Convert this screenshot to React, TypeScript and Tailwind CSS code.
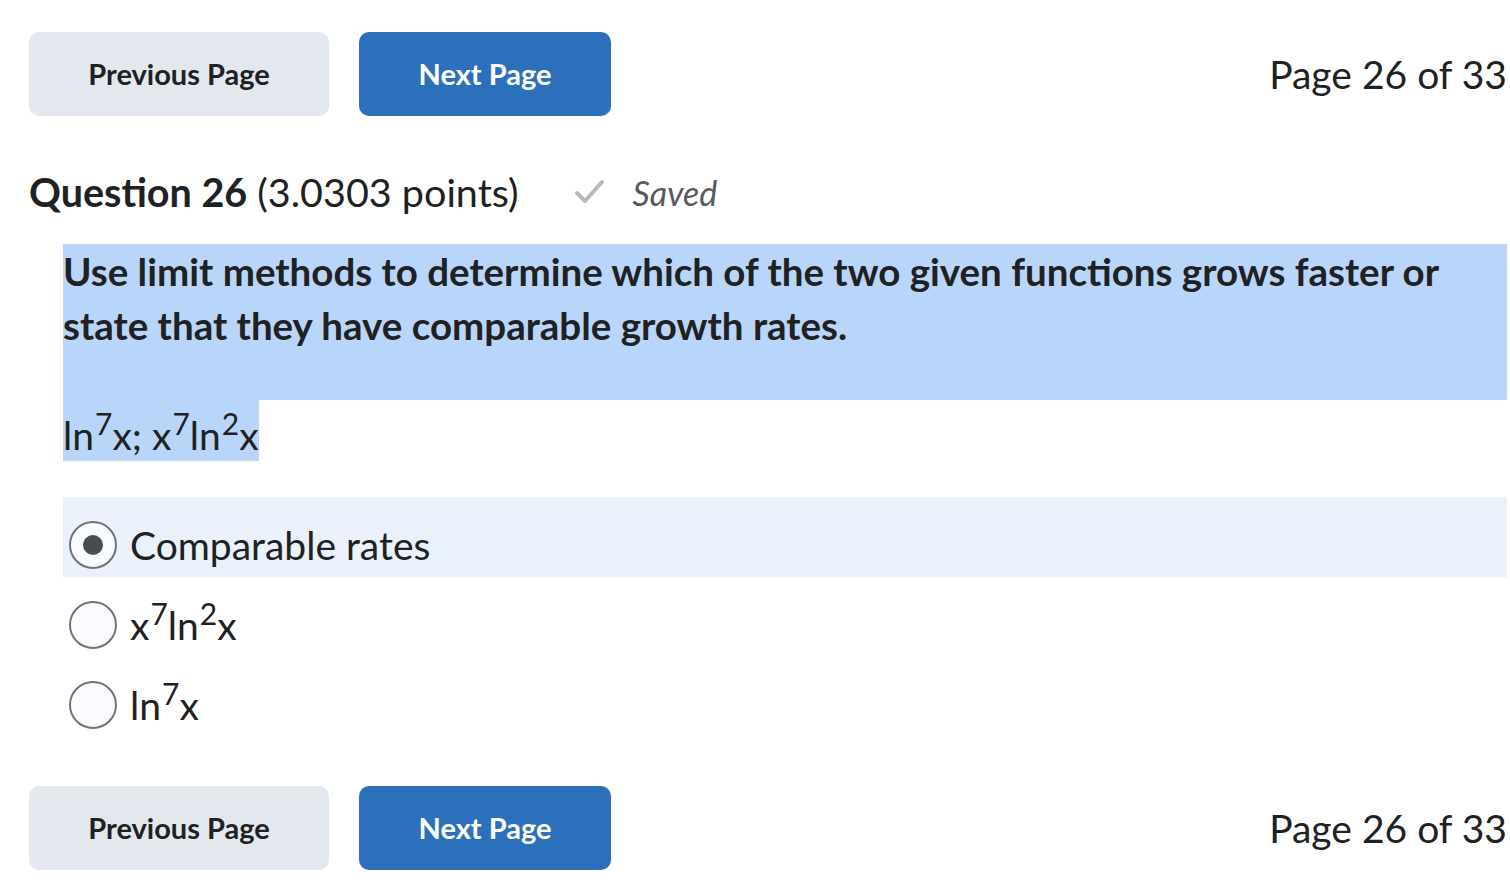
function Radio({ checked }: { checked?: boolean }) {
  return (
    <span className="flex h-[48px] w-[48px] shrink-0 items-center justify-center rounded-full border-2 border-[#6f7478] bg-[#f9fbff]">
      {checked && <span className="h-[20px] w-[20px] rounded-full bg-[#494c4e]" />}
    </span>
  );
}

function Pager() {
  return (
    <div className="flex items-center">
      <button className="h-[84px] w-[300px] rounded-[10px] bg-[#e3e8ee] text-[29px] font-bold text-[#202122]">
        Previous Page
      </button>
      <button className="ml-[30px] h-[84px] w-[252px] rounded-[10px] bg-[#2c6fba] text-[29px] font-bold text-white">
        Next Page
      </button>
      <div className="ml-auto text-[39px] text-[#202122]">Page 26 of 33</div>
    </div>
  );
}

export default function App() {
  return (
    <div
      className="min-h-screen bg-white pl-[29px] pr-[3px] pt-[32px] text-[#202122]"
      style={{ fontFamily: "Lato, 'Noto Sans', sans-serif" }}
    >
      <Pager />

      <div className="mt-[50px] flex items-center">
        <h2 className="text-[39.5px] leading-[52px]">
          <span className="font-bold">Question 26</span> (3.0303 points)
        </h2>
        <svg className="ml-[55px]" width="32" height="28" viewBox="0 0 32 28" fill="none">
          <path d="M3 15 L11 23 L28 4" stroke="#b5babd" strokeWidth="4" strokeLinecap="round" strokeLinejoin="round" />
        </svg>
        <span className="ml-[27px] text-[34px] italic text-[#565a5c]">Saved</span>
      </div>

      <div className="ml-[34px] mt-[28px]">
        <div className="bg-[#b9d6fa] pb-[46px]">
          <p className="-mt-[2px] pb-[2px] text-[38.5px] font-bold leading-[54px]">
            Use limit methods to determine which of the two given functions grows faster or state that they have
            comparable growth rates.
          </p>
        </div>
        <div className="inline-block bg-[#b9d6fa] pt-[9px] text-[39px] leading-[52px]">
          ln<sup className="ml-[1px] text-[30px]">7</sup>x; x<sup className="ml-[1px] text-[30px]">7</sup>ln
          <sup className="ml-[1px] text-[30px]">2</sup>x
        </div>

        <div className="mt-[36px] flex flex-col">
          <label className="flex h-[80px] items-center gap-[13px] bg-[#eaf1fb] pl-[6px] pt-[16px] text-[39px]">
            <Radio checked />
            Comparable rates
          </label>
          <label className="flex h-[80px] items-center gap-[13px] pl-[6px] pt-[16px] text-[39px]">
            <Radio />
            <span>
              x<sup className="ml-[1px] text-[30px]">7</sup>ln<sup className="ml-[1px] text-[30px]">2</sup>x
            </span>
          </label>
          <label className="flex h-[80px] items-center gap-[13px] pl-[6px] pt-[16px] text-[39px]">
            <Radio />
            <span>
              ln<sup className="ml-[1px] text-[30px]">7</sup>x
            </span>
          </label>
        </div>
      </div>

      <div className="mt-[49px]">
        <Pager />
      </div>
    </div>
  );
}
